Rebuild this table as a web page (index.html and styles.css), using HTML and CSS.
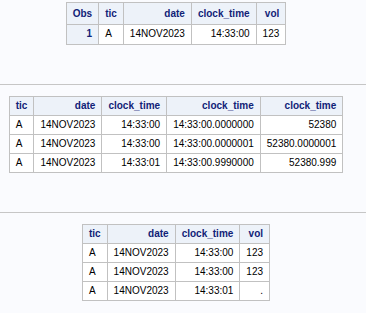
FILE: index.html
```html
<!DOCTYPE html>
<html>
<head>
<meta charset="utf-8">
<link rel="stylesheet" href="styles.css">
</head>
<body>
<div class="page">
  <table class="table first">
    <thead>
      <tr><th class="r">Obs</th><th class="l">tic</th><th class="r">date</th><th class="r">clock_time</th><th class="r">vol</th></tr>
    </thead>
    <tbody>
      <tr><th class="r rowh">1</th><td class="l">A</td><td class="r">14NOV2023</td><td class="r">14:33:00</td><td class="r">123</td></tr>
    </tbody>
  </table>
  <hr class="rule">
  <table class="table">
    <thead>
      <tr><th class="l">tic</th><th class="r">date</th><th class="r">clock_time</th><th class="r">clock_time</th><th class="r">clock_time</th></tr>
    </thead>
    <tbody>
      <tr><td class="l">A</td><td class="r">14NOV2023</td><td class="r">14:33:00</td><td class="r">14:33:00.0000000</td><td class="r">52380</td></tr>
      <tr><td class="l">A</td><td class="r">14NOV2023</td><td class="r">14:33:00</td><td class="r">14:33:00.0000001</td><td class="r">52380.0000001</td></tr>
      <tr><td class="l">A</td><td class="r">14NOV2023</td><td class="r">14:33:01</td><td class="r">14:33:00.9990000</td><td class="r">52380.999</td></tr>
    </tbody>
  </table>
  <hr class="rule">
  <table class="table">
    <thead>
      <tr><th class="l">tic</th><th class="r">date</th><th class="r">clock_time</th><th class="r">vol</th></tr>
    </thead>
    <tbody>
      <tr><td class="l">A</td><td class="r">14NOV2023</td><td class="r">14:33:00</td><td class="r">123</td></tr>
      <tr><td class="l">A</td><td class="r">14NOV2023</td><td class="r">14:33:00</td><td class="r">123</td></tr>
      <tr><td class="l">A</td><td class="r">14NOV2023</td><td class="r">14:33:01</td><td class="r">.</td></tr>
    </tbody>
  </table>
</div>
</body>
</html>
```
FILE: styles.css
```css
html, body {
  margin: 0;
  padding: 0;
  background: #fafbfe;
}
body {
  font-family: "Liberation Sans", Arial, sans-serif;
  font-size: 10px;
  color: #000000;
}
.page {
  width: 352px;
  padding-top: 2px;
}
.table {
  border-collapse: collapse;
  margin: 0 auto;
  border: 1px solid #c1c1c1;
}
.table th,
.table td {
  border: 1px solid #c1c1c1;
  padding: 3px 6px;
  line-height: 12px;
  white-space: nowrap;
}
.table th {
  background: #edf2f9;
  color: #112277;
  font-weight: bold;
}
.table td {
  background: #ffffff;
}
.first thead th {
  padding-top: 5px;
  padding-bottom: 4px;
}
.first tbody th,
.first tbody td {
  padding-bottom: 4px;
}
.l { text-align: left; }
.r { text-align: right; }
.rule {
  width: 366px;
  height: 0;
  border: 0;
  border-top: 1px solid #c6c6c6;
  margin: 39px 0 11px 0;
}
```
